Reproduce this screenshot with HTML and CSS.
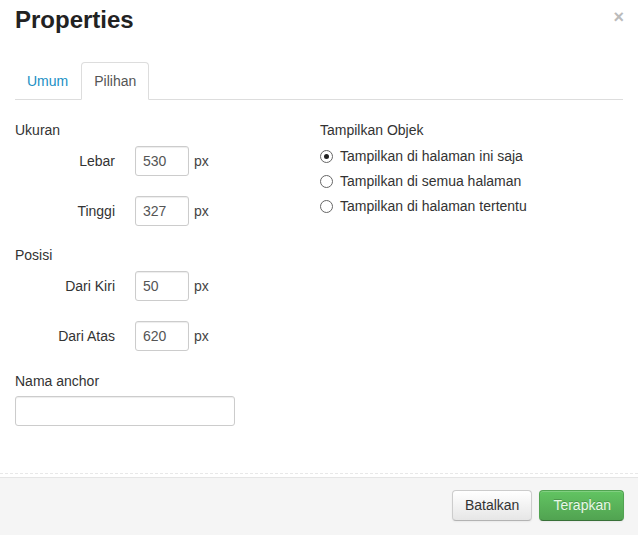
FILE: index.html
```html
<!DOCTYPE html>
<html>
<head>
<meta charset="utf-8">
<link rel="stylesheet" href="styles.css">
</head>
<body>
<div class="modal">
  <div class="modal-header">
    <h3 class="title">Properties</h3>
    <span class="close">&times;</span>
    <ul class="tabs">
      <li><a class="tab">Umum</a></li>
      <li><a class="tab active">Pilihan</a></li>
    </ul>
  </div>
  <div class="modal-body">
    <div class="col-left">
      <div class="section">Ukuran</div>
      <div class="row first"><span class="lbl">Lebar</span><span class="input small">530</span><span class="unit">px</span></div>
      <div class="row"><span class="lbl">Tinggi</span><span class="input small">327</span><span class="unit">px</span></div>
      <div class="section sec2">Posisi</div>
      <div class="row first"><span class="lbl">Dari Kiri</span><span class="input small">50</span><span class="unit">px</span></div>
      <div class="row"><span class="lbl">Dari Atas</span><span class="input small">620</span><span class="unit">px</span></div>
      <div class="section sec3">Nama anchor</div>
      <div class="input wide"></div>
    </div>
    <div class="col-right">
      <div class="section">Tampilkan Objek</div>
      <div class="radios">
        <div class="radio-row"><span class="radio checked"></span>Tampilkan di halaman ini saja</div>
        <div class="radio-row"><span class="radio"></span>Tampilkan di semua halaman</div>
        <div class="radio-row"><span class="radio"></span>Tampilkan di halaman tertentu</div>
      </div>
    </div>
  </div>
  <div class="modal-footer">
    <button class="btn">Batalkan</button>
    <button class="btn btn-success">Terapkan</button>
  </div>
</div>
</body>
</html>
```
FILE: styles.css
```css
html, body {
  margin: 0;
  padding: 0;
  background: #fff;
}
body {
  font-family: "Liberation Sans", Arial, sans-serif;
  font-size: 14px;
  color: #333;
}
.modal {
  width: 638px;
  height: 535px;
  display: flex;
  flex-direction: column;
  overflow: hidden;
}
.modal-header {
  position: relative;
  padding: 5px 15px 0;
}
.title {
  margin: 0;
  font-size: 24px;
  line-height: 30px;
  font-weight: bold;
  color: #222;
}
.close {
  position: absolute;
  top: 7px;
  right: 14px;
  font-size: 18px;
  font-weight: bold;
  line-height: 20px;
  color: #bbb;
}
.tabs {
  list-style: none;
  margin: 27px 0 0;
  padding: 0;
  display: flex;
  border-bottom: 1px solid #ddd;
  height: 37px;
}
.tab {
  display: block;
  padding: 8px 12px 8px 11px;
  line-height: 20px;
  border: 1px solid transparent;
  border-radius: 4px 4px 0 0;
  color: #1a8fc4;
  margin-bottom: -1px;
}
.tab.active {
  padding: 8px 12px;
  color: #555;
  border-color: #ddd #ddd transparent;
  background: #fff;
}
.modal-body {
  flex: 1;
  display: flex;
  padding: 20px 15px 0;
  border-bottom: 1px dashed #e8e8e8;
}
.col-left {
  width: 305px;
}
.col-right {
  flex: 1;
}
.section {
  line-height: 20px;
}
.sec2 {
  margin-top: 19px;
}
.sec3 {
  margin-top: 20px;
}
.row {
  display: flex;
  align-items: center;
  margin-top: 20px;
}
.row.first {
  margin-top: 6px;
}
.lbl {
  width: 100px;
  text-align: right;
  margin-right: 20px;
}
.input {
  box-sizing: border-box;
  height: 30px;
  border: 1px solid #ccc;
  border-radius: 3px;
  box-shadow: inset 0 1px 1px rgba(0,0,0,0.075);
  padding: 4px 7px;
  line-height: 20px;
  color: #555;
  background: #fff;
}
.input.small {
  width: 54px;
}
.input.wide {
  width: 220px;
  margin-top: 5px;
}
.unit {
  margin-left: 5px;
  color: #444;
}
.radios {
  margin-top: 4px;
}
.radio-row {
  display: flex;
  align-items: center;
  line-height: 25px;
}
.radio {
  box-sizing: border-box;
  width: 13px;
  height: 13px;
  border: 1px solid #666;
  border-radius: 50%;
  margin-right: 7px;
  display: flex;
  align-items: center;
  justify-content: center;
  background: #fff;
}
.radio.checked::after {
  content: "";
  width: 5px;
  height: 5px;
  border-radius: 50%;
  background: #222;
}
.modal-footer {
  height: 58px;
  box-sizing: border-box;
  margin-top: 3px;
  border-top: 1px solid #e5e5e5;
  background: #f5f5f5;
  padding: 12px 14px 0;
  display: flex;
  justify-content: flex-end;
  align-items: flex-start;
  gap: 7px;
}
.btn {
  font-family: "Liberation Sans", Arial, sans-serif;
  font-size: 14px;
  line-height: 21px;
  padding: 4px 12px;
  border: 1px solid #ccc;
  border-bottom-color: #b3b3b3;
  border-radius: 4px;
  color: #333;
  background: linear-gradient(#ffffff, #e6e6e6);
  box-shadow: inset 0 1px 0 rgba(255,255,255,0.2), 0 1px 2px rgba(0,0,0,0.05);
}
.btn-success {
  padding: 4px 12px 4px 13px;
  color: #e8f8e8;
  background: linear-gradient(#62c462, #51a351);
  border-color: #51a351 #51a351 #387038;
  text-shadow: 0 -1px 0 rgba(0,0,0,0.2);
}
```
